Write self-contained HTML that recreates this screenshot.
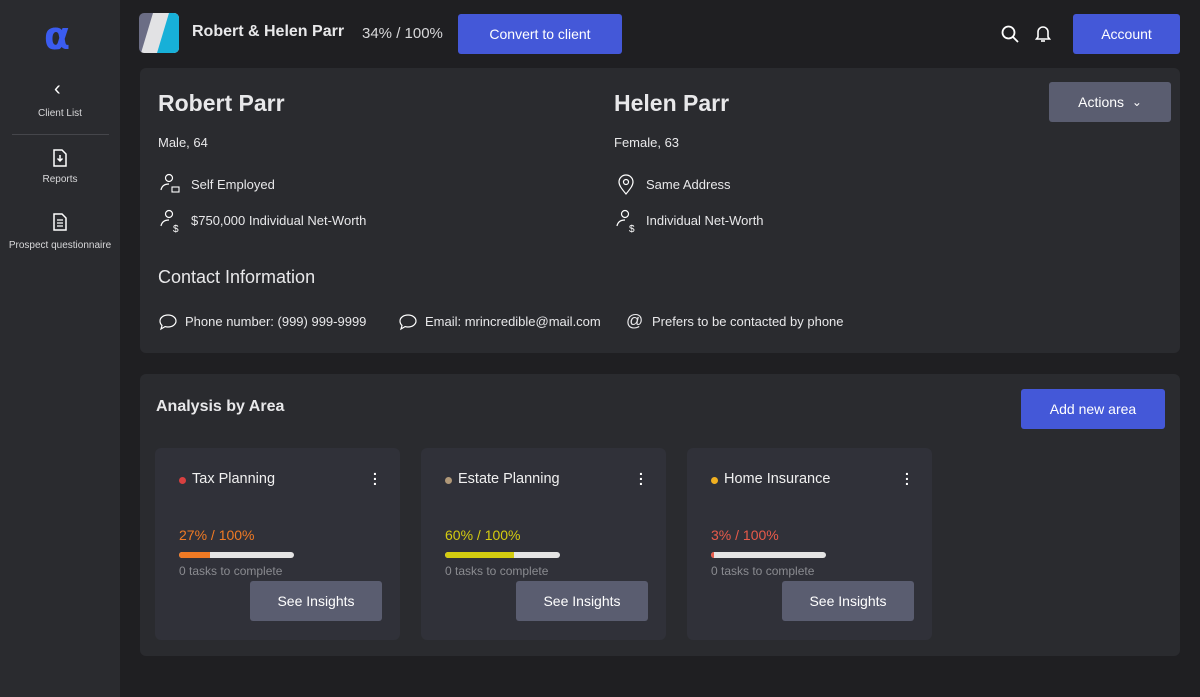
<!DOCTYPE html>
<html><head><meta charset="utf-8"><style>
*{box-sizing:border-box;margin:0;padding:0}
body{width:1200px;height:697px;background:#1f1f22;font-family:"Liberation Sans",sans-serif;color:#e8e8ea;position:relative;overflow:hidden}
.side{position:absolute;left:0;top:0;width:120px;height:697px;background:#2a2b2f}
.side .it{position:absolute;width:120px;text-align:center;font-size:10px;color:#d8d8da}
.abs{position:absolute}
.btn{position:absolute;background:#4458d8;color:#fff;border-radius:3px;font-size:14px;display:flex;align-items:center;justify-content:center}
.panel{position:absolute;background:#2a2b2f;border-radius:6px}
.t{position:absolute;white-space:nowrap}
.card{position:absolute;top:448px;width:245px;height:192px;background:#303139;border-radius:6px}
.card .dot{position:absolute;left:24px;top:29px;width:7px;height:7px;border-radius:50%}
.card .name{position:absolute;left:37px;top:23px;font-size:14.5px;color:#f0f0f0}
.card .dots{position:absolute;left:218px;top:20px;color:#fff;font-size:14px;font-weight:bold;line-height:5px}
.card .pct{position:absolute;left:24px;top:79px;font-size:14px}
.card .bar{position:absolute;left:24px;top:104px;width:115px;height:6px;background:#e4e4e4;border-radius:3px;overflow:hidden}
.card .bar i{display:block;height:6px}
.card .tasks{position:absolute;left:24px;top:116px;font-size:12px;color:#8a8b90}
.card .si{position:absolute;left:95px;top:133px;width:132px;height:40px;background:#5a5d70;border-radius:3px;color:#fff;font-size:14px;display:flex;align-items:center;justify-content:center}
</style></head><body>
<div class="side">
 <div class="t" style="left:44px;top:14px;font-size:38px;font-weight:bold;color:#3b5cf0;font-family:'DejaVu Sans',sans-serif">&#945;</div>
 <div class="t" style="left:54px;top:78px;font-size:20px;color:#fff">&#8249;</div>
 <div class="it" style="top:108px">Client List</div>
 <div class="abs" style="left:12px;top:134px;width:97px;height:1px;background:#45464b"></div>
 <svg class="abs" style="left:52px;top:149px" width="16" height="18" viewBox="0 0 16 18"><path d="M2 1h8l4 4v12H2z" fill="none" stroke="#fff" stroke-width="1.5"/><path d="M8 6v6M5.5 9.5 8 12l2.5-2.5" stroke="#fff" stroke-width="1.5" fill="none"/></svg>
 <div class="it" style="top:174px">Reports</div>
 <svg class="abs" style="left:52px;top:213px" width="16" height="18" viewBox="0 0 16 18"><path d="M2 1h8l4 4v12H2z" fill="none" stroke="#fff" stroke-width="1.5"/><path d="M5 7h6M5 10h6M5 13h6" stroke="#fff" stroke-width="1.3"/></svg>
 <div class="it" style="top:240px">Prospect questionnaire</div>
</div>
<svg class="abs" style="left:139px;top:13px" width="40" height="40" viewBox="0 0 40 40"><defs><clipPath id="c"><rect width="40" height="40" rx="5"/></clipPath></defs><g clip-path="url(#c)"><rect width="40" height="40" fill="#6b6d85"/><path d="M14 0h26v40H2z" fill="#e2e2e4"/><path d="M30 0h10v40H18z" fill="#17b0d8"/></g></svg>
<div class="t" style="left:192px;top:23px;font-size:16px;font-weight:bold">Robert &amp; Helen Parr</div>
<div class="t" style="left:362px;top:25px;font-size:15px;color:#d8d8da">34% / 100%</div>
<div class="btn" style="left:458px;top:14px;width:164px;height:40px">Convert to client</div>
<svg class="abs" style="left:1000px;top:24px" width="20" height="20" viewBox="0 0 20 20"><circle cx="8.5" cy="8.5" r="6" fill="none" stroke="#fff" stroke-width="1.8"/><path d="M13 13l5 5" stroke="#fff" stroke-width="1.8"/></svg>
<svg class="abs" style="left:1033px;top:23px" width="20" height="20" viewBox="0 0 20 20"><path d="M5 14V9a5 5 0 0 1 10 0v5l1.5 2h-13z" fill="none" stroke="#fff" stroke-width="1.6"/><path d="M8 18h4" stroke="#fff" stroke-width="1.6"/></svg>
<div class="btn" style="left:1073px;top:14px;width:107px;height:40px">Account</div>

<div class="panel" style="left:140px;top:68px;width:1040px;height:285px"></div>
<div class="t" style="left:158px;top:90px;font-size:23px;font-weight:bold">Robert Parr</div>
<div class="t" style="left:158px;top:135px;font-size:13px">Male, 64</div>
<div class="t" style="left:191px;top:177px;font-size:13px">Self Employed</div>
<div class="t" style="left:191px;top:213px;font-size:13px">$750,000 Individual Net-Worth</div>
<svg class="abs" style="left:160px;top:173px" width="20" height="22"><circle cx="9" cy="5" r="3.5" fill="none" stroke="#fff" stroke-width="1.2"/><path d="M1 17c1-5 5-6 8-6" fill="none" stroke="#fff" stroke-width="1.2"/><rect x="12" y="14" width="7" height="5" fill="none" stroke="#fff" stroke-width="1.1"/></svg>
<svg class="abs" style="left:160px;top:209px" width="22" height="24"><circle cx="9" cy="5" r="3.5" fill="none" stroke="#fff" stroke-width="1.2"/><path d="M1 17c1-5 5-6 8-6" fill="none" stroke="#fff" stroke-width="1.2"/><text x="13" y="23" font-size="10" fill="#fff" font-family="Liberation Sans">$</text></svg>
<div class="t" style="left:614px;top:90px;font-size:23px;font-weight:bold">Helen Parr</div>
<div class="t" style="left:614px;top:135px;font-size:13px">Female, 63</div>
<div class="t" style="left:646px;top:177px;font-size:13px">Same Address</div>
<div class="t" style="left:646px;top:213px;font-size:13px">Individual Net-Worth</div>
<svg class="abs" style="left:617px;top:174px" width="20" height="22"><path d="M9 20C4 14 2 11 2 8a7 7 0 0 1 14 0c0 3-2 6-7 12z" fill="none" stroke="#fff" stroke-width="1.2"/><circle cx="9" cy="8" r="2.5" fill="none" stroke="#fff" stroke-width="1.2"/></svg>
<svg class="abs" style="left:616px;top:209px" width="22" height="24"><circle cx="9" cy="5" r="3.5" fill="none" stroke="#fff" stroke-width="1.2"/><path d="M1 17c1-5 5-6 8-6" fill="none" stroke="#fff" stroke-width="1.2"/><text x="13" y="23" font-size="10" fill="#fff" font-family="Liberation Sans">$</text></svg>
<div class="abs" style="left:1049px;top:82px;width:122px;height:40px;background:#5a5d70;border-radius:3px;color:#fff;font-size:14px;display:flex;align-items:center;justify-content:center">Actions &nbsp;<span style="font-size:12px">&#8964;</span></div>
<div class="t" style="left:158px;top:267px;font-size:18px">Contact Information</div>
<svg class="abs" style="left:159px;top:313px" width="20" height="18"><path d="M9 2c4.5 0 8 2.7 8 6s-3.5 6-8 6c-1 0-2-.1-3-.4L2 16l1-3.5C1.8 11.4 1 9.8 1 8c0-3.3 3.5-6 8-6z" fill="none" stroke="#fff" stroke-width="1.2"/></svg>
<div class="t" style="left:185px;top:314px;font-size:13px">Phone number: (999) 999-9999</div>
<svg class="abs" style="left:399px;top:313px" width="20" height="18"><path d="M9 2c4.5 0 8 2.7 8 6s-3.5 6-8 6c-1 0-2-.1-3-.4L2 16l1-3.5C1.8 11.4 1 9.8 1 8c0-3.3 3.5-6 8-6z" fill="none" stroke="#fff" stroke-width="1.2"/></svg>
<div class="t" style="left:425px;top:314px;font-size:13px">Email: mrincredible@mail.com</div>
<div class="t" style="left:626px;top:311px;font-size:17px">@</div>
<div class="t" style="left:652px;top:314px;font-size:13px">Prefers to be contacted by phone</div>

<div class="panel" style="left:140px;top:374px;width:1040px;height:282px"></div>
<div class="t" style="left:156px;top:398px;font-size:16px;font-weight:bold">Analysis by Area</div>
<div class="btn" style="left:1021px;top:389px;width:144px;height:40px">Add new area</div>

<div class="card" style="left:155px"><div class="dot" style="background:#d84040"></div><div class="name">Tax Planning</div><div class="dots">.<br>.<br>.</div><div class="pct" style="color:#f07a24">27% / 100%</div><div class="bar"><i style="width:27%;background:#f07a24"></i></div><div class="tasks">0 tasks to complete</div><div class="si">See Insights</div></div>
<div class="card" style="left:421px"><div class="dot" style="background:#b09878"></div><div class="name">Estate Planning</div><div class="dots">.<br>.<br>.</div><div class="pct" style="color:#d4cc10">60% / 100%</div><div class="bar"><i style="width:60%;background:#d4cc10"></i></div><div class="tasks">0 tasks to complete</div><div class="si">See Insights</div></div>
<div class="card" style="left:687px"><div class="dot" style="background:#f0b020"></div><div class="name">Home Insurance</div><div class="dots">.<br>.<br>.</div><div class="pct" style="color:#e85a4a">3% / 100%</div><div class="bar"><i style="width:3%;background:#e85a4a"></i></div><div class="tasks">0 tasks to complete</div><div class="si">See Insights</div></div>
</body></html>
